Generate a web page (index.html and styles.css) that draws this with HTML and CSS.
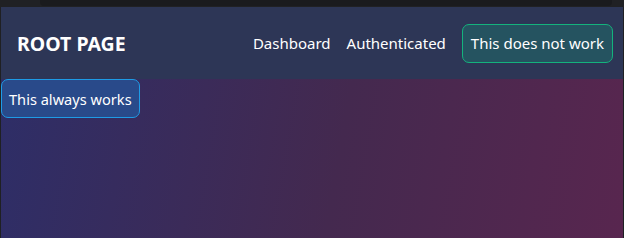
FILE: index.html
```html
<!DOCTYPE html>
<html>
<head>
    <meta charset="utf-8">
    <title>Root Page</title>
    <link rel="stylesheet" href="styles.css">
</head>
<body>
<div class="titlebar"><div class="titlebar-tab"></div></div>
<div class="app">
    <header class="topbar">
        <div class="brand">ROOT PAGE</div>
        <nav class="nav">
            <a href="#" class="nav-link">Dashboard</a>
            <a href="#" class="nav-link">Authenticated</a>
            <button class="btn btn-green">This does not work</button>
        </nav>
    </header>
    <main class="content">
        <button class="btn btn-blue">This always works</button>
    </main>
</div>
</body>
</html>
```

FILE: styles.css
```css
html, body { margin: 0; height: 100%; }
body { background: #1f2023; font-family: "Noto Sans", "Open Sans", sans-serif; display: flex; flex-direction: column; }
.titlebar { height: 7px; background: #202124; flex-shrink: 0; padding: 0 12px 0 40px; }
.titlebar-tab { height: 6px; background: #1a1b1e; border-radius: 0 0 4px 4px; }
.app { flex: 1; margin: 0 1px; display: flex; flex-direction: column; background: linear-gradient(100deg, #2d2e68 0%, #44294f 55%, #58264f 100%); }
.topbar { height: 72px; background: #2d3656; display: flex; align-items: center; justify-content: space-between; padding: 0 10px 0 16px; box-sizing: border-box; }
.brand { color: #fff; font-weight: bold; font-size: 19.5px; }
.nav { display: flex; align-items: center; gap: 16px; }
.nav-link { color: #fff; text-decoration: none; font-size: 15px; }
.btn { font-family: inherit; font-size: 15px; color: #fff; border-radius: 7px; padding: 0 8px; height: 39px; cursor: pointer; }
.btn-green { background: #255360; border: 1px solid #14b37d; }
.btn-blue { background: #294a8a; border: 1px solid #1e9be6; padding: 0 7px; font-size: 14.6px; }
.content { flex: 1; }
```
